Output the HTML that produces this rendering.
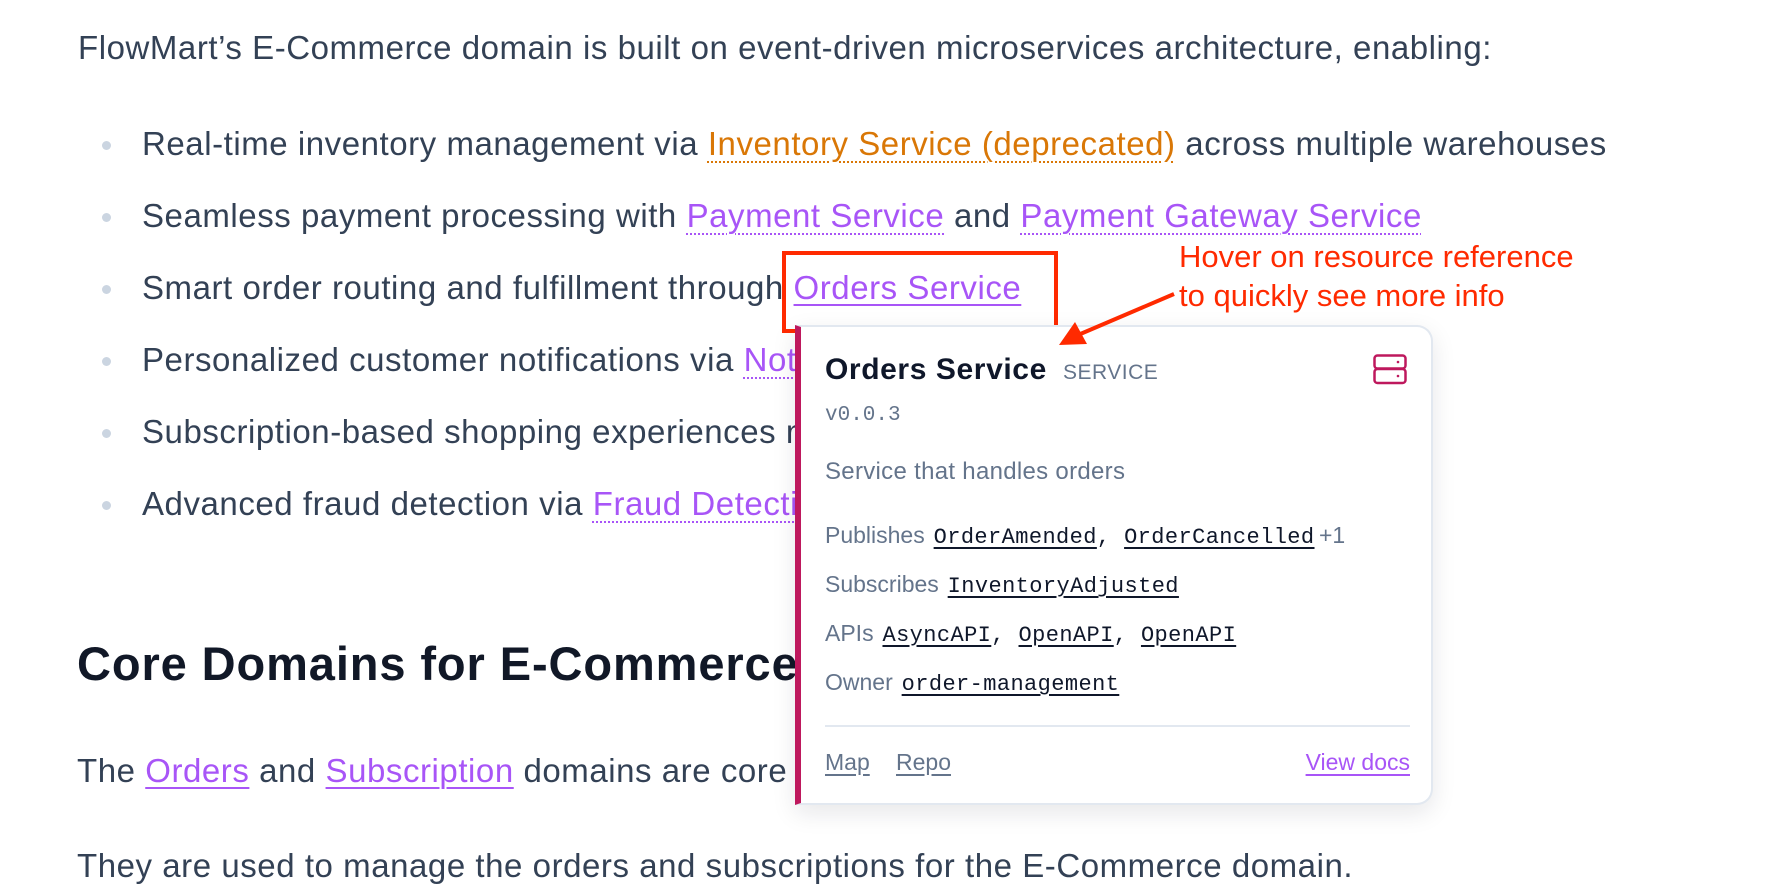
<!DOCTYPE html>
<html><head><meta charset="utf-8"><style>
html,body{margin:0;padding:0;width:1770px;height:894px;overflow:hidden;background:#fff;font-family:"Liberation Sans",sans-serif;}
.t{position:absolute;white-space:nowrap;line-height:1;}
.body{font-size:33px;color:#334155;letter-spacing:0.55px;}
.dot{position:absolute;width:9px;height:9px;border-radius:50%;background:#cbd5e1;left:102px;}
.lk{color:#a855f7;text-decoration:underline dotted;text-decoration-thickness:2px;text-underline-offset:6px;}
.or{color:#d97706;text-decoration:underline dotted;text-decoration-thickness:2px;text-underline-offset:6px;}
.sl{color:#a855f7;text-decoration:underline;text-decoration-thickness:2px;text-underline-offset:5px;}
.card{position:absolute;left:795px;top:325px;width:638px;height:480px;background:#fff;border:2px solid #e2e8f0;border-left:6px solid #be185d;border-radius:0 16px 16px 0;box-shadow:0 8px 24px rgba(15,23,42,0.10);box-sizing:border-box;}
.lab{color:#64748b;font-size:23px;}
.mono{font-family:"Liberation Mono",monospace;color:#0f172a;text-decoration:underline;text-underline-offset:4px;font-size:22px;letter-spacing:0.4px;}
</style></head><body>

<div class="t body" style="left:78px;top:31px;">FlowMart’s E-Commerce domain is built on event-driven microservices architecture, enabling:</div>

<div class="dot" style="top:141px"></div>
<div class="t body" style="left:142px;top:127px;">Real-time inventory management via <span class="or">Inventory Service (deprecated)</span> across multiple warehouses</div>
<div class="dot" style="top:213px"></div>
<div class="t body" style="left:142px;top:199px;">Seamless payment processing with <span class="lk">Payment Service</span> and <span class="lk">Payment Gateway Service</span></div>
<div class="dot" style="top:285px"></div>
<div class="t body" style="left:142px;top:271px;">Smart order routing and fulfillment through <span class="sl">Orders Service</span></div>
<div class="dot" style="top:357px"></div>
<div class="t body" style="left:142px;top:343px;">Personalized customer notifications via <span class="lk">Notifications Service</span></div>
<div class="dot" style="top:429px"></div>
<div class="t body" style="left:142px;top:415px;">Subscription-based shopping experiences managed by Subscription Service</div>
<div class="dot" style="top:501px"></div>
<div class="t body" style="left:142px;top:487px;">Advanced fraud detection via <span class="lk">Fraud Detection Service</span></div>

<div class="t" style="left:77px;top:640px;font-size:47px;font-weight:bold;color:#111827;letter-spacing:0.9px;">Core Domains for E-Commerce</div>
<div class="t body" style="left:77px;top:754px;">The <span class="sl">Orders</span> and <span class="sl">Subscription</span> domains are core domains for the business.</div>
<div class="t body" style="left:77px;top:849px;">They are used to manage the orders and subscriptions for the E-Commerce domain.</div>

<div style="position:absolute;left:782px;top:251px;width:276px;height:82px;border:4px solid #ff2a00;box-sizing:border-box;"></div>

<div class="card">
  <div class="t" style="left:24px;top:28px;font-size:30px;font-weight:bold;color:#0f172a;letter-spacing:0.6px;">Orders Service</div>
  <div class="t" style="left:262px;top:35px;font-size:21px;color:#64748b;letter-spacing:0.5px;">SERVICE</div>
  <svg style="position:absolute;left:572px;top:27px" width="34" height="31" viewBox="0 0 34 31"><rect x="1.5" y="1.5" width="31" height="13" rx="3" fill="none" stroke="#be185d" stroke-width="2.5"/><rect x="1.5" y="15" width="31" height="14" rx="3" fill="none" stroke="#be185d" stroke-width="2.5"/><circle cx="25" cy="8" r="1.3" fill="#be185d"/><circle cx="25" cy="22" r="1.3" fill="#be185d"/></svg>
  <div class="t" style="left:24px;top:78px;font-size:21px;font-family:'Liberation Mono',monospace;color:#64748b;">v0.0.3</div>
  <div class="t" style="left:24px;top:133px;font-size:24px;color:#64748b;letter-spacing:0.3px;">Service that handles orders</div>
  <div class="t" style="left:24px;top:197px;"><span class="lab">Publishes</span>&nbsp;&nbsp;<span class="mono">OrderAmended</span><span class="mono" style="text-decoration:none">, </span><span class="mono">OrderCancelled</span>&nbsp;<span class="lab">+1</span></div>
  <div class="t" style="left:24px;top:246px;"><span class="lab">Subscribes</span>&nbsp;&nbsp;<span class="mono">InventoryAdjusted</span></div>
  <div class="t" style="left:24px;top:295px;"><span class="lab">APIs</span>&nbsp;&nbsp;<span class="mono">AsyncAPI</span><span class="mono" style="text-decoration:none">, </span><span class="mono">OpenAPI</span><span class="mono" style="text-decoration:none">, </span><span class="mono">OpenAPI</span></div>
  <div class="t" style="left:24px;top:344px;"><span class="lab">Owner</span>&nbsp;&nbsp;<span class="mono">order-management</span></div>
  <div style="position:absolute;left:24px;top:398px;width:585px;height:2px;background:#e2e8f0;"></div>
  <div class="t" style="left:24px;top:424px;font-size:23px;color:#64748b;text-decoration:underline;text-underline-offset:4px;">Map</div>
  <div class="t" style="left:95px;top:424px;font-size:23px;color:#64748b;text-decoration:underline;text-underline-offset:4px;">Repo</div>
  <div class="t" style="right:21px;top:424px;font-size:23px;color:#a855f7;text-decoration:underline;text-underline-offset:4px;">View docs</div>
</div>

<div class="t" style="left:1179px;top:241px;font-size:31px;color:#ff2a00;">Hover on resource reference</div>
<div class="t" style="left:1179px;top:280px;font-size:31px;color:#ff2a00;">to quickly see more info</div>
<svg style="position:absolute;left:0;top:0" width="1770" height="894"><line x1="1174" y1="294" x2="1078" y2="335" stroke="#ff2a00" stroke-width="4"/><polygon points="1059,345 1075,322 1087,344" fill="#ff2a00"/></svg>
</body></html>
